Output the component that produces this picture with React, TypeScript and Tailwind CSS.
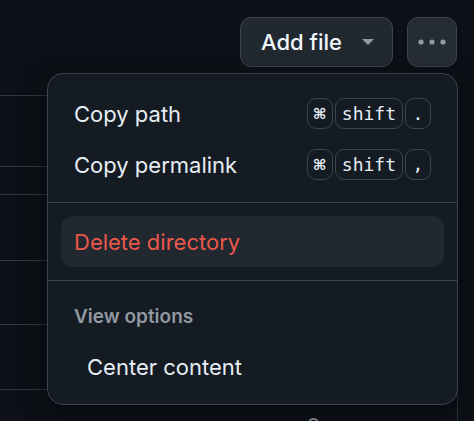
import React from "react";

const font = { fontFamily: "Inter, 'Noto Sans', 'Liberation Sans', sans-serif" };

function Kbd({ children }: { children: React.ReactNode }) {
  return (
    <span className="flex h-[31px] min-w-[26px] items-center justify-center rounded-[9px] border border-[#3d444d] bg-[#151b23] px-[6px] text-[18px] leading-none text-[#e6edf3] [font-family:'DejaVu_Sans_Mono','Liberation_Mono',monospace]">
      {children}
    </span>
  );
}

function Item({
  label,
  keys,
  className = "",
}: {
  label: string;
  keys?: string[];
  className?: string;
}) {
  return (
    <div className={`flex h-[51px] items-center justify-between rounded-[12px] px-[13px] ${className}`}>
      <span className="text-[22px] leading-none">{label}</span>
      {keys && (
        <span className="flex items-center gap-[2px]">
          {keys.map((k, i) => (
            <Kbd key={k}>
              {i === 0 ? <span className="text-[20px] font-bold">{k}</span> : k}
            </Kbd>
          ))}
        </span>
      )}
    </div>
  );
}

export default function App() {
  return (
    <div
      className="relative h-[421px] w-[474px] overflow-hidden bg-[#0d1117] text-[#e6edf3]"
      style={font}
    >
      {/* top bar */}
      <div className="flex h-[95px] items-start justify-end gap-[14px] pr-[17px] pt-[17px]">
        <button className="flex h-[50px] w-[153px] items-center gap-[20px] rounded-[11px] border border-[#3d444d] bg-[#212830] pl-[20px] text-[22px] font-medium text-[#f0f6fc]">
          <span>Add file</span>
          <svg width="12" height="6" viewBox="0 0 12 6">
            <path d="M0 0h12L6 6z" fill="#9198a1" />
          </svg>
        </button>
        <button className="flex h-[50px] w-[50px] items-center justify-center rounded-[11px] border border-[#3d444d] bg-[#262c36]">
          <svg width="28" height="6" viewBox="0 0 28 6">
            <circle cx="3" cy="3" r="2.6" fill="#9198a1" />
            <circle cx="14" cy="3" r="2.6" fill="#9198a1" />
            <circle cx="25" cy="3" r="2.6" fill="#9198a1" />
          </svg>
        </button>
      </div>

      {/* table behind */}
      <div className="w-[458px] border-r border-t border-[#30363d]">
        <div className="h-[71px] border-b border-[#30363d]" />
        <div className="h-[28px] border-b border-[#30363d]" />
        <div className="h-[66px] border-b border-[#30363d]" />
        <div className="h-[64px] border-b border-[#30363d]" />
        <div className="h-[65px] border-b border-[#30363d]" />
        <div className="flex h-[60px] justify-end pr-[28px] pt-[20px] text-[22px] text-[#9198a1]">
          9 years ago
        </div>
      </div>

      {/* menu overlay */}
      <div className="absolute left-[47px] top-[73px] flex h-[332px] w-[411px] flex-col rounded-[16px] border border-[#3d444d] bg-[#151b23] shadow-[0_8px_24px_rgba(1,4,9,0.6)]">
        <div className="px-[13px] pt-[14px] pb-[12px]">
          <Item label="Copy path" keys={["⌘", "shift", "."]} />
          <Item label="Copy permalink" keys={["⌘", "shift", ","]} />
        </div>
        <div className="h-px bg-[#3d444d]" />
        <div className="px-[13px] py-[13px]">
          <Item label="Delete directory" className="bg-[#212830] text-[#e9574b]" />
        </div>
        <div className="h-px bg-[#3d444d]" />
        <div className="px-[13px] pt-[24px]">
          <div className="px-[13px] text-[19px] font-semibold leading-[24px] text-[#9198a1]">
            View options
          </div>
          <div className="mt-[12px]">
            <Item label="Center content" className="pl-[26px]" />
          </div>
        </div>
      </div>
    </div>
  );
}
